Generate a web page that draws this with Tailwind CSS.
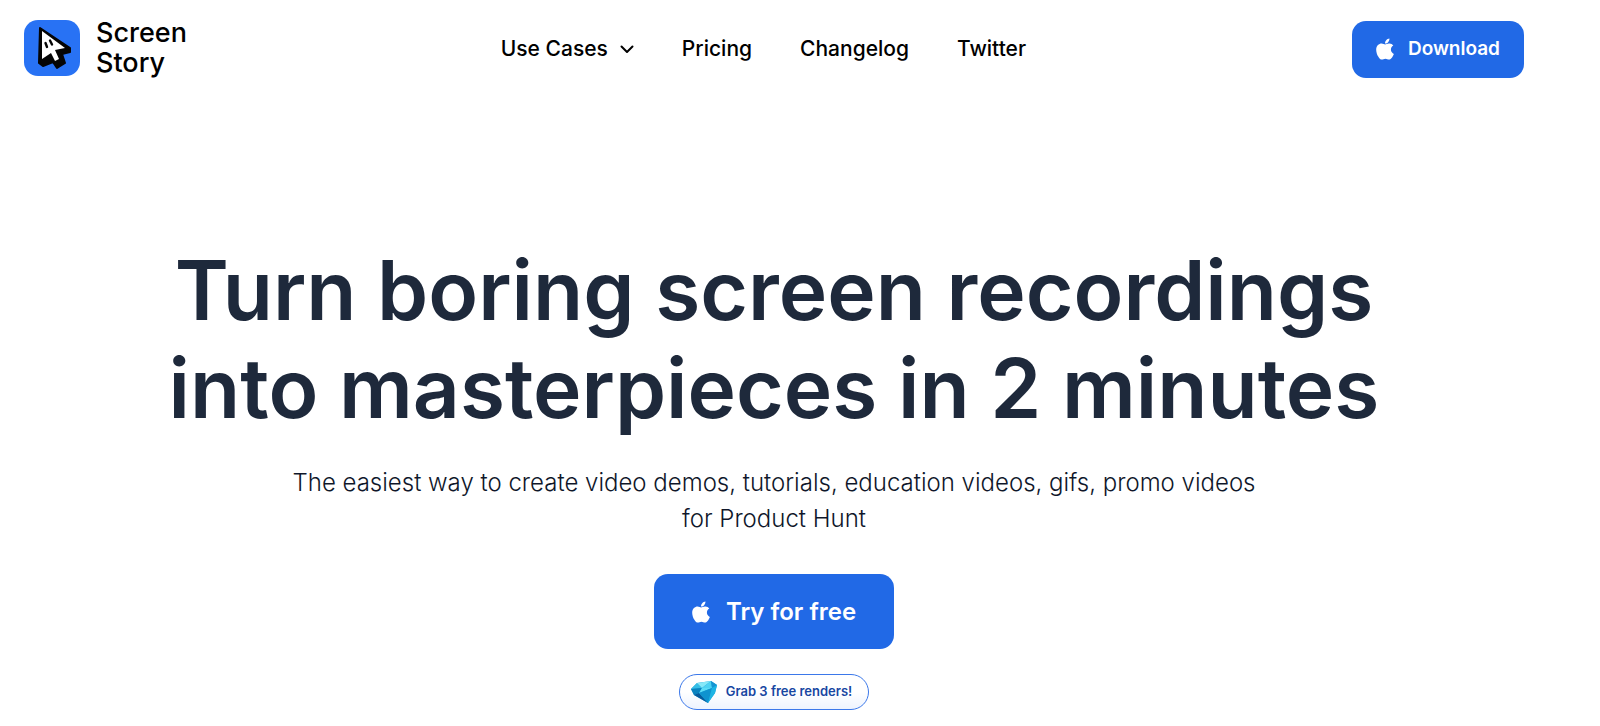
<!DOCTYPE html>
<html lang="en">
<head>
<meta charset="utf-8">
<meta name="viewport" content="width=device-width, initial-scale=1">
<title>Screen Story</title>
<script src="https://cdn.jsdelivr.net/npm/@tailwindcss/browser@4"></script>
</head>
<body class="bg-white pr-[52px] font-['Inter',sans-serif] text-black">
<svg class="hidden" aria-hidden="true">
  <symbol id="apple" viewBox="0 0 384 512">
    <path fill="currentColor" d="M318.7 268.7c-.2-36.7 16.4-64.4 50-84.8-18.8-26.9-47.2-41.7-84.7-44.6-35.5-2.8-74.3 20.7-88.500 20.700-15 0-49.400-19.700-76.400-19.700C63.300 141.200 4 184.800 4 273.500q0 39.300 14.400 81.200c12.800 36.700 59 126.700 107.200 125.200 25.200-.6 43-17.900 75.800-17.900 31.800 0 48.300 17.900 76.400 17.900 48.600-.7 90.400-82.500 102.600-119.300-65.200-30.700-61.700-90-61.700-91.900zm-56.600-164.200c27.300-32.400 24.800-61.900 24-72.500-24.100 1.400-52 16.400-67.900 34.900-17.500 19.800-27.800 44.300-25.600 71.900 26.100 2 49.900-11.400 69.500-34.300z"/>
  </symbol>
</svg>

<header class="flex items-center justify-between px-6 pt-[18px]">
  <a href="#" class="flex items-center gap-4">
    <svg class="size-14" viewBox="0 0 56 56" aria-hidden="true">
      <rect width="56" height="56" rx="14" fill="#2872f4"/>
      <path d="M16 8 46 28 46 32 38 34 41 43 33 48 29 42 19 46 15 43Z" fill="#050505" stroke="#050505" stroke-width="2" stroke-linejoin="round"/>
      <path d="M18 11 41 28 31 30 35 39 31 41 27 33 18 39Z" fill="#fff"/>
      <path d="M21.500 23 23 27M26 20.500 28 24.500" stroke="#050505" stroke-width="2.400" stroke-linecap="round"/>
    </svg>
    <span class="text-[27px] leading-[30px] font-medium">Screen<br>Story</span>
  </a>
  <nav class="mr-3 flex items-center gap-12 pt-0.5 text-[21px] leading-[30px] font-medium">
    <button type="button" class="flex items-center gap-3">Use Cases
      <svg class="w-[14px]" viewBox="0 0 14 9" fill="none" stroke="currentColor" stroke-width="2" stroke-linecap="round" stroke-linejoin="round" aria-hidden="true"><path d="M1.500 1.500 7 7l5.500-5.500"/></svg>
    </button>
    <a href="#">Pricing</a>
    <a href="#">Changelog</a>
    <a href="#">Twitter</a>
  </nav>
  <button type="button" class="mt-0.5 flex h-[57px] items-center gap-3.5 rounded-[14px] bg-[#2169e6] px-6 text-[19px] font-semibold text-white">
    <svg class="h-6 w-[18px]" aria-hidden="true"><use href="#apple"/></svg>Download
  </button>
</header>

<main class="flex flex-col items-center pt-[164px] text-center">
  <h1 class="text-[82px] leading-[98px] font-semibold text-[#1e293b]">Turn boring screen recordings<br>into masterpieces in 2 minutes</h1>
  <p class="mt-[27px] text-[24px] leading-9 font-light text-[#0f172a]">The easiest way to create video demos, tutorials, education videos, gifs, promo videos<br>for Product Hunt</p>
  <button type="button" class="mt-[37px] flex h-[75px] items-center gap-4 rounded-[14px] bg-[#2169e6] px-[38px] text-[24px] font-semibold text-white">
    <svg class="h-6 w-[18px]" aria-hidden="true"><use href="#apple"/></svg>Try for free
  </button>
  <a href="#" class="mt-[25px] flex h-9 items-center gap-2 rounded-full border border-[#3b78ea] bg-linear-to-b from-white from-50% to-[#edf3fe] pr-4 pl-2.5 text-[13px] font-semibold text-[#1746a2]">
    <svg class="h-6 w-7" viewBox="0 0 28 24" aria-hidden="true">
      <path d="M1 9 7 3 21 1 27 5 25 13 18 23 4 15Z" fill="#159bd7"/>
      <path d="M1 9 7 3 12 8Z" fill="#36bee6"/>
      <path d="M7 3 21 1 12 8Z" fill="#86e8f8"/>
      <path d="M21 1 22 8 12 8Z" fill="#4fd2f2"/>
      <path d="M21 1 27 5 22 8Z" fill="#1595d2"/>
      <path d="M1 9 12 8 9 13 4 15Z" fill="#0b83bf"/>
      <path d="M12 8 22 8 9 13Z" fill="#5cdcf6"/>
      <path d="M4 15 9 13 18 23Z" fill="#075b9c"/>
      <path d="M9 13 22 8 18 23Z" fill="#0f93cf"/>
      <path d="M22 8 27 5 25 13 18 23Z" fill="#1cb4e4"/>
    </svg>Grab 3 free renders!
  </a>
</main>
</body>
</html>
